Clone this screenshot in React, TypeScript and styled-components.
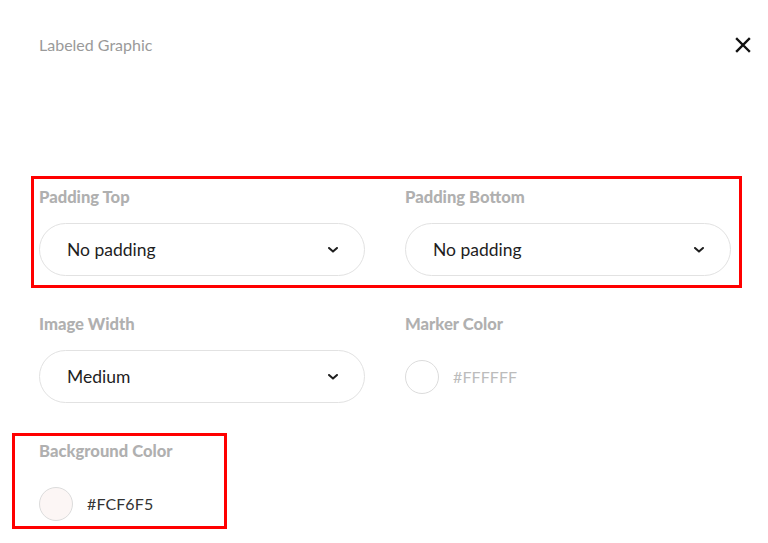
import React from 'react';
import styled, { createGlobalStyle, css } from 'styled-components';

const GlobalStyle = createGlobalStyle`
  html, body {
    margin: 0;
    padding: 0;
    background: #ffffff;
  }
  body {
    font-family: Lato, "Open Sans", sans-serif;
    -webkit-font-smoothing: antialiased;
  }
`;

// layout
const Panel = styled.div`
  width: 768px;
  height: 543px;
  box-sizing: border-box;
  padding: 34px 17px 0 39px;
  overflow: hidden;
`;

const Header = styled.div`
  display: flex;
  justify-content: space-between;
  align-items: center;
  height: 22px;
  margin-bottom: 129px;
`;

const Title = styled.h1`
  margin: 0;
  font-size: 16px;
  line-height: 22px;
  font-weight: 400;
  color: #9a9a9a;
`;

const CloseButton = styled.button`
  display: flex;
  align-items: center;
  justify-content: center;
  width: 18px;
  height: 18px;
  margin-right: -1px;
  padding: 0;
  border: none;
  background: none;
  cursor: pointer;
`;

const Form = styled.div`
  display: flex;
  flex-direction: column;
  gap: 36px;
  margin-right: 20px;
`;

const highlight = css<{ $box: string }>`
  &::after {
    content: '';
    position: absolute;
    ${(p) => p.$box}
    border: 3px solid #ff0000;
    box-sizing: border-box;
    pointer-events: none;
  }
`;

const Row = styled.div<{ $box?: string }>`
  position: relative;
  display: grid;
  grid-template-columns: 1fr 1fr;
  column-gap: 40px;
  ${(p) => p.$box && highlight}
`;

const Field = styled.div<{ $box?: string }>`
  position: relative;
  display: flex;
  flex-direction: column;
  gap: 14px;
  ${(p) => p.$box && highlight}
`;

const Label = styled.label`
  font-size: 16.6px;
  line-height: 24px;
  font-weight: 900;
  color: #b0b0b0;
`;

const Select = styled.div`
  display: flex;
  align-items: center;
  justify-content: space-between;
  height: 53px;
  box-sizing: border-box;
  padding: 0 26px 0 27px;
  border: 1px solid #e2e2e2;
  border-radius: 27px;
  font-size: 17.5px;
  color: #1e1e1e;
  cursor: pointer;
`;

const ColorControl = styled.div`
  display: flex;
  align-items: center;
  gap: 14px;
  height: 53px;
`;

const Swatch = styled.span<{ $color: string }>`
  width: 34px;
  height: 34px;
  box-sizing: border-box;
  border-radius: 50%;
  border: 1px solid #dcdcdc;
  background: ${(p) => p.$color};
`;

const ColorValue = styled.span<{ $muted?: boolean }>`
  font-size: 16px;
  color: ${(p) => (p.$muted ? '#bcbcbc' : '#333333')};
  letter-spacing: 0.1px;
`;

function Chevron() {
  return (
    <svg width="10" height="6" viewBox="0 0 10 6" fill="none">
      <polyline
        points="1,1 5,4.6 9,1"
        stroke="#1e1e1e"
        strokeWidth="2"
        strokeLinecap="round"
        strokeLinejoin="round"
      />
    </svg>
  );
}

function CloseIcon() {
  return (
    <svg width="16" height="16" viewBox="0 0 16 16" fill="none">
      <path
        d="M2 2 L14 14 M14 2 L2 14"
        stroke="#111"
        strokeWidth="2.4"
        strokeLinecap="square"
      />
    </svg>
  );
}

type SelectFieldProps = {
  label: string;
  value: string;
  box?: string;
};

function SelectField({ label, value, box }: SelectFieldProps) {
  return (
    <Field $box={box}>
      <Label>{label}</Label>
      <Select>
        <span>{value}</span>
        <Chevron />
      </Select>
    </Field>
  );
}

type ColorFieldProps = {
  label: string;
  color: string;
  muted?: boolean;
  box?: string;
};

function ColorField({ label, color, muted, box }: ColorFieldProps) {
  return (
    <Field $box={box}>
      <Label>{label}</Label>
      <ColorControl>
        <Swatch $color={color} />
        <ColorValue $muted={muted}>{color}</ColorValue>
      </ColorControl>
    </Field>
  );
}

export default function App() {
  return (
    <>
      <GlobalStyle />
      <Panel>
        <Header>
          <Title>Labeled Graphic</Title>
          <CloseButton aria-label="Close">
            <CloseIcon />
          </CloseButton>
        </Header>
        <Form>
          <Row $box="top: -9px; left: -8px; right: -11px; bottom: -12px;">
            <SelectField label="Padding Top" value="No padding" />
            <SelectField label="Padding Bottom" value="No padding" />
          </Row>
          <Row>
            <SelectField label="Image Width" value="Medium" />
            <ColorField label="Marker Color" color="#FFFFFF" muted />
          </Row>
          <Row>
            <ColorField
              label="Background Color"
              color="#FCF6F5"
              box="top: -6px; left: -27px; width: 215px; height: 96px;"
            />
          </Row>
        </Form>
      </Panel>
    </>
  );
}
